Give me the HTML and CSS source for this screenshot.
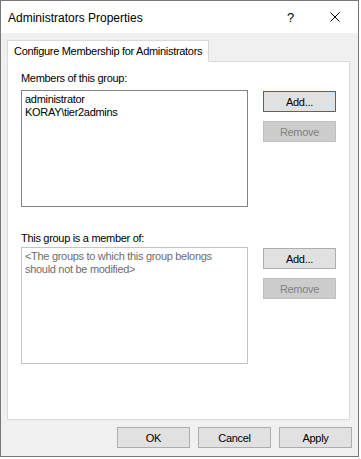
FILE: index.html
```html
<!DOCTYPE html>
<html lang="en">
<head>
  <meta charset="UTF-8">
  <title>Administrators Properties</title>
  <link rel="stylesheet" href="styles.css">
</head>
<body>

  <div class="dialog">
    <!-- title bar -->
    <div class="titlebar">
      <span class="title">Administrators Properties</span>
      <span class="caption-btn help">?</span>
      <span class="caption-btn close">
        <svg width="10" height="10" viewBox="0 0 10 10">
          <path d="M0.5 0.5 L9.5 9.5 M9.5 0.5 L0.5 9.5" stroke="#000" stroke-width="1" fill="none"/>
        </svg>
      </span>
    </div>

    <div class="content">
      <div class="tabs">
        <div class="tab active">Configure Membership for Administrators</div>
      </div>

      <div class="panel">
        <div class="group first">
          <div class="label">Members of this group:</div>
          <div class="row">
            <div class="listbox">
              <div class="item">administrator</div>
              <div class="item">KORAY\tier2admins</div>
            </div>
            <div class="side">
              <button class="btn default">Add...</button>
              <button class="btn" disabled>Remove</button>
            </div>
          </div>
        </div>

        <div class="group second">
          <div class="label">This group is a member of:</div>
          <div class="row">
            <div class="listbox readonly">
              <div class="item">&lt;The groups to which this group belongs should not be modified&gt;</div>
            </div>
            <div class="side">
              <button class="btn">Add...</button>
              <button class="btn" disabled>Remove</button>
            </div>
          </div>
        </div>
      </div>

      <div class="footer">
        <button class="btn">OK</button>
        <button class="btn">Cancel</button>
        <button class="btn">Apply</button>
      </div>
    </div>
  </div>

</body>
</html>
```

FILE: styles.css
```css
* {
  margin: 0;
  padding: 0;
  box-sizing: border-box;
}

body, html {
  height: 100%;
  background: #fff;
  overflow: hidden;
}

body {
  font-family: 'Liberation Sans', Arial, sans-serif;
  font-size: 11px;
  letter-spacing: -0.3px;
  color: #000;
}

/* fenêtre */
.dialog {
  width: 359px;
  height: 457px;
  border: 1px solid #777;
  background: #f0f0f0;
  display: flex;
  flex-direction: column;
}

.titlebar {
  height: 32px;
  background: #fff;
  display: flex;
  align-items: center;
  padding-left: 7px;
  padding-top: 1px;
}

.title {
  flex: 1;
  font-size: 12px;
  letter-spacing: 0;
}

.caption-btn {
  width: 46px;
  height: 31px;
  display: flex;
  align-items: center;
  justify-content: center;
}

.help {
  font-size: 13px;
  letter-spacing: 0;
  padding-left: 3px;
}

.close svg {
  display: block;
  margin-top: -1px;
}

.content {
  flex: 1;
  padding: 7px 6px 8px 6px;
  display: flex;
  flex-direction: column;
}

/* onglets */
.tabs {
  display: flex;
}

.tab {
  height: 22px;
  padding: 4px 6px 0 6px;
  border: 1px solid #d9d9d9;
  border-bottom: 1px solid #fff;
  background: #fff;
  margin-bottom: -1px;
  position: relative;
}

.panel {
  height: 359px;
  margin-right: 2px;
  background: #fff;
  border: 1px solid #d9d9d9;
  padding: 10px 0 0 13px;
}

.label {
  line-height: 13px;
}

.group.first .label {
  margin-bottom: 5px;
}

.group.second {
  margin-top: 25px;
}

.group.second .label {
  margin-bottom: 2px;
}

.row {
  display: flex;
  gap: 15px;
}

.listbox {
  width: 227px;
  height: 117px;
  border: 1px solid #828282;
  padding: 2px 3px;
  line-height: 13px;
}

.listbox.readonly {
  border-color: #c4c4c4;
  color: #6d6d6d;
  padding-right: 28px;
}

.side {
  display: flex;
  flex-direction: column;
  gap: 9px;
  padding-top: 1px;
}

/* boutons */
.btn {
  width: 73px;
  height: 21px;
  font-family: inherit;
  font-size: 11px;
  letter-spacing: -0.3px;
  color: #000;
  background: #e1e1e1;
  border: 1px solid #adadad;
}

.btn.default {
  border-color: #0078d7;
}

.btn:disabled {
  background: #cccccc;
  border-color: #bfbfbf;
  color: #838383;
}

.footer {
  display: flex;
  justify-content: flex-end;
  gap: 8px;
  margin-top: 7px;
}
```
